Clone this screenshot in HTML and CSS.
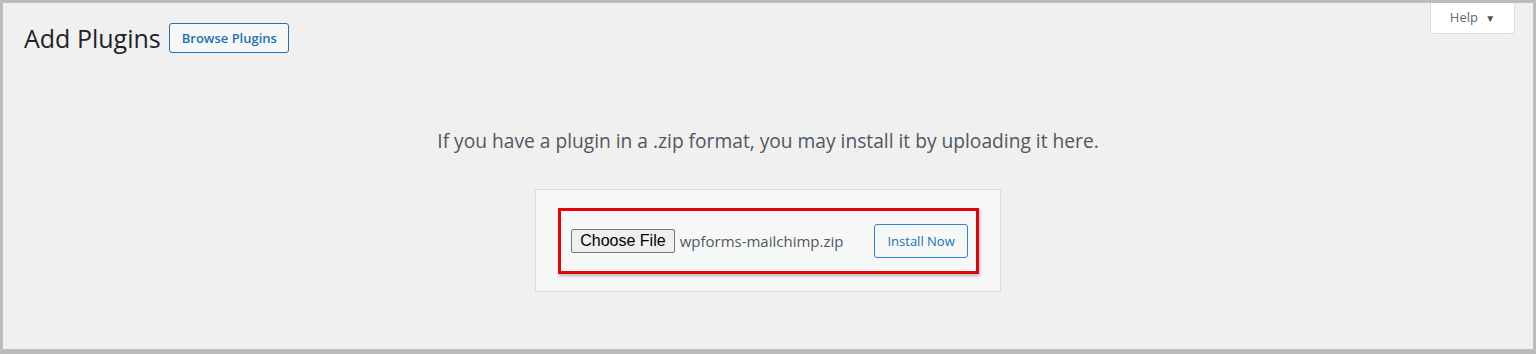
FILE: index.html
```html
<!DOCTYPE html>
<html lang="en">
<head>
    <meta charset="UTF-8">
    <meta name="viewport" content="width=device-width, initial-scale=1.0">
    <title>Add Plugins</title>
    <link rel="stylesheet" href="styles.css">
</head>
<body>
    <div class="frame">
        <div class="top">
            <div class="title_row">
                <h1 class="title">Add Plugins</h1>
                <a class="button browse" href="#">Browse Plugins</a>
            </div>
            <div class="help_tab">Help <span class="arrow">&#9660;</span></div>
        </div>

        <p class="install_help">If you have a plugin in a .zip format, you may install it by uploading it here.</p>

        <div class="upload_row">
            <form class="upload_form">
                <div class="marker">
                    <span class="choose_btn">Choose File</span>
                    <span class="file_name">wpforms-mailchimp.zip</span>
                    <span class="button install">Install Now</span>
                </div>
            </form>
        </div>
    </div>
</body>
</html>
```

FILE: styles.css
```css
html, body {
  margin: 0;
  padding: 0;
}

body {
  font-family: "Open Sans", "Noto Sans", sans-serif;
  background: #bdbdbd;
}

.frame {
  box-sizing: border-box;
  height: 354px;
  border-style: solid;
  border-color: #bcbcbc;
  border-width: 3px 3px 5px 3px;
  background: #f0f0f1;
}

.top {
  display: flex;
  justify-content: space-between;
  align-items: flex-start;
}

.title_row {
  display: flex;
  align-items: center;
  margin: 17px 0 0 21px;
}

.title {
  margin: 0 8px 0 0;
  font-size: 25px;
  font-weight: 400;
  color: #1d2327;
  line-height: 36px;
}

.button {
  display: inline-block;
  box-sizing: border-box;
  border: 1px solid #2271b1;
  border-radius: 3px;
  background: #f6f7f7;
  color: #2271b1;
  text-decoration: none;
}

.browse {
  height: 30px;
  line-height: 28px;
  padding: 0 11px 0 12px;
  font-size: 13px;
  font-weight: 600;
}

.help_tab {
  box-sizing: border-box;
  width: 85px;
  height: 31px;
  margin-right: 18px;
  border: 1px solid #dcdcde;
  border-top: none;
  border-radius: 0 0 4px 4px;
  background: #fff;
  color: #646970;
  font-size: 13px;
  line-height: 28px;
  text-align: center;
}

.help_tab .arrow {
  font-size: 10px;
  margin-left: 4px;
  color: #50575e;
}

.install_help {
  margin: 71px 0 0;
  text-align: center;
  font-size: 19.2px;
  color: #50575e;
}

.upload_row {
  display: flex;
  justify-content: center;
  margin-top: 35px;
}

.upload_form {
  margin: 0;
  padding: 18px 21px 17px 22px;
  border: 1px solid #dcdcde;
  background: #f6f7f7;
}

.marker {
  display: flex;
  align-items: center;
  padding: 13px 8px 13px 10px;
  border: 3px solid #e8000b;
  box-shadow: 1px 2px 3px rgba(0, 0, 0, 0.25);
}

.choose_btn {
  box-sizing: border-box;
  height: 24px;
  padding: 0 8px;
  border: 1px solid #767676;
  border-radius: 2px;
  background: #efefef;
  color: #000;
  font-family: "Liberation Sans", Arial, sans-serif;
  font-size: 16px;
  line-height: 22px;
}

.file_name {
  margin-left: 5px;
  font-size: 15px;
  color: #50575e;
}

.install {
  height: 34px;
  line-height: 32px;
  margin-left: 31px;
  padding: 0 12px;
  font-size: 13px;
  border-color: #3582c4;
}
```
